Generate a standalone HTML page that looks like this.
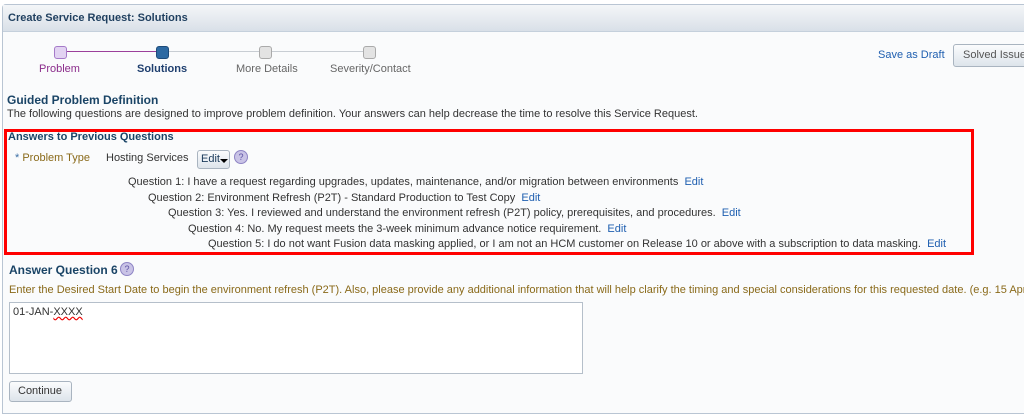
<!DOCTYPE html>
<html><head><style>
body{margin:0;width:1024px;height:413px;overflow:hidden;background:#fff;font-family:"Liberation Sans",sans-serif;font-size:11px;color:#333;position:relative}
.a{position:absolute;white-space:nowrap}
.panel{position:absolute;left:2px;top:4px;width:1021px;height:408px;border:1px solid #b9c5d3;border-right:none;border-radius:4px 0 0 0;background:#fafbfc;overflow:hidden}
.hdr{position:absolute;left:3px;top:5px;width:1021px;height:26px;background:linear-gradient(#f4f6f8,#d9e0e8);border-bottom:1px solid #c5d0dc}
.node{position:absolute;width:11px;height:11px;border-radius:3px;top:46px}
.line{position:absolute;top:51px;height:1px}
.blue{color:#1f5fb0}
.b{font-weight:bold;color:#1a4466}
.btn{position:absolute;border:1px solid #a9b4c0;border-radius:3px;background:linear-gradient(#fbfcfd,#dde4eb);color:#333;overflow:hidden}
.q{position:absolute;width:12px;height:12px;border-radius:50%;background:#c9c3e6;border:1px solid #8e84c4;font-size:9px;text-align:center;line-height:12px;color:#5c51a3}
</style></head><body>
<div class="panel"></div>
<div class="hdr"></div>
<div class="a b" style="left:8px;top:12px;font-size:11px;color:#1f3f5f">Create Service Request: Solutions</div>
<div class="line" style="left:66px;width:96px;background:#9b3f9b"></div>
<div class="line" style="left:168px;width:200px;background:#c8cdd3"></div>
<div class="node" style="left:54px;background:#e2d3f2;border:1px solid #a57ac9"></div>
<div class="node" style="left:156px;background:#2d6aa3;border:1px solid #1d4b7a"></div>
<div class="node" style="left:259px;background:#e3e3e3;border:1px solid #aaa"></div>
<div class="node" style="left:363px;background:#e3e3e3;border:1px solid #aaa"></div>
<div class="a" style="left:39px;top:63px;color:#8b2c8b">Problem</div>
<div class="a b" style="left:137px;top:63px;color:#1f3f6f">Solutions</div>
<div class="a" style="left:236px;top:63px;color:#666">More Details</div>
<div class="a" style="left:330px;top:63px;color:#666">Severity/Contact</div>
<div class="a blue" style="left:878px;top:49px">Save as Draft</div>
<div class="btn" style="left:953px;top:44px;width:80px;height:21px"><span style="position:absolute;left:9px;top:4px;color:#555">Solved Issue</span></div>
<div class="a b" style="left:7px;top:93px;font-size:12px">Guided Problem Definition</div>
<div class="a" style="left:7px;top:108px">The following questions are designed to improve problem definition. Your answers can help decrease the time to resolve this Service Request.</div>
<div class="a" style="left:4px;top:129px;width:964px;height:120px;border:3px solid #f00"></div>
<div class="a b" style="left:8px;top:131px">Answers to Previous Questions</div>
<div class="a" style="left:15px;top:152px;color:#8a6a1a"><span style="color:#3a6ea5">*</span> Problem Type</div>
<div class="a" style="left:106px;top:152px">Hosting Services</div>
<div class="btn" style="left:197px;top:150px;width:31px;height:17px"><span style="position:absolute;left:3px;top:2px;color:#1a3a5a">Edit</span><span style="position:absolute;left:22px;top:8px;border:4px solid transparent;border-top:4px solid #000;width:0;height:0"></span></div>
<div class="q" style="left:234px;top:150px">?</div>
<div class="a" style="left:128px;top:176px">Question 1: I have a request regarding upgrades, updates, maintenance, and/or migration between environments &nbsp;<span class="blue">Edit</span></div>
<div class="a" style="left:148px;top:192px">Question 2: Environment Refresh (P2T) - Standard Production to Test Copy &nbsp;<span class="blue">Edit</span></div>
<div class="a" style="left:168px;top:207px">Question 3: Yes. I reviewed and understand the environment refresh (P2T) policy, prerequisites, and procedures. &nbsp;<span class="blue">Edit</span></div>
<div class="a" style="left:188px;top:223px">Question 4: No. My request meets the 3-week minimum advance notice requirement. &nbsp;<span class="blue">Edit</span></div>
<div class="a" style="left:208px;top:238px">Question 5: I do not want Fusion data masking applied, or I am not an HCM customer on Release 10 or above with a subscription to data masking. &nbsp;<span class="blue">Edit</span></div>
<div class="a b" style="left:9px;top:263px;font-size:12px">Answer Question 6</div>
<div class="q" style="left:120px;top:262px">?</div>
<div class="a" style="left:9px;top:284px;color:#8a6a1a">Enter the Desired Start Date to begin the environment refresh (P2T). Also, please provide any additional information that will help clarify the timing and special considerations for this requested date. (e.g. 15 Apr</div>
<div class="a" style="left:9px;top:302px;width:572px;height:70px;border:1px solid #b5bfca;background:#fff"></div>
<div class="a" style="left:13px;top:306px">01-JAN-<span style="text-decoration:underline wavy #e00">XXXX</span></div>
<div class="btn" style="left:9px;top:381px;width:61px;height:19px"><span style="position:absolute;left:8px;top:3px">Continue</span></div>
</body></html>
